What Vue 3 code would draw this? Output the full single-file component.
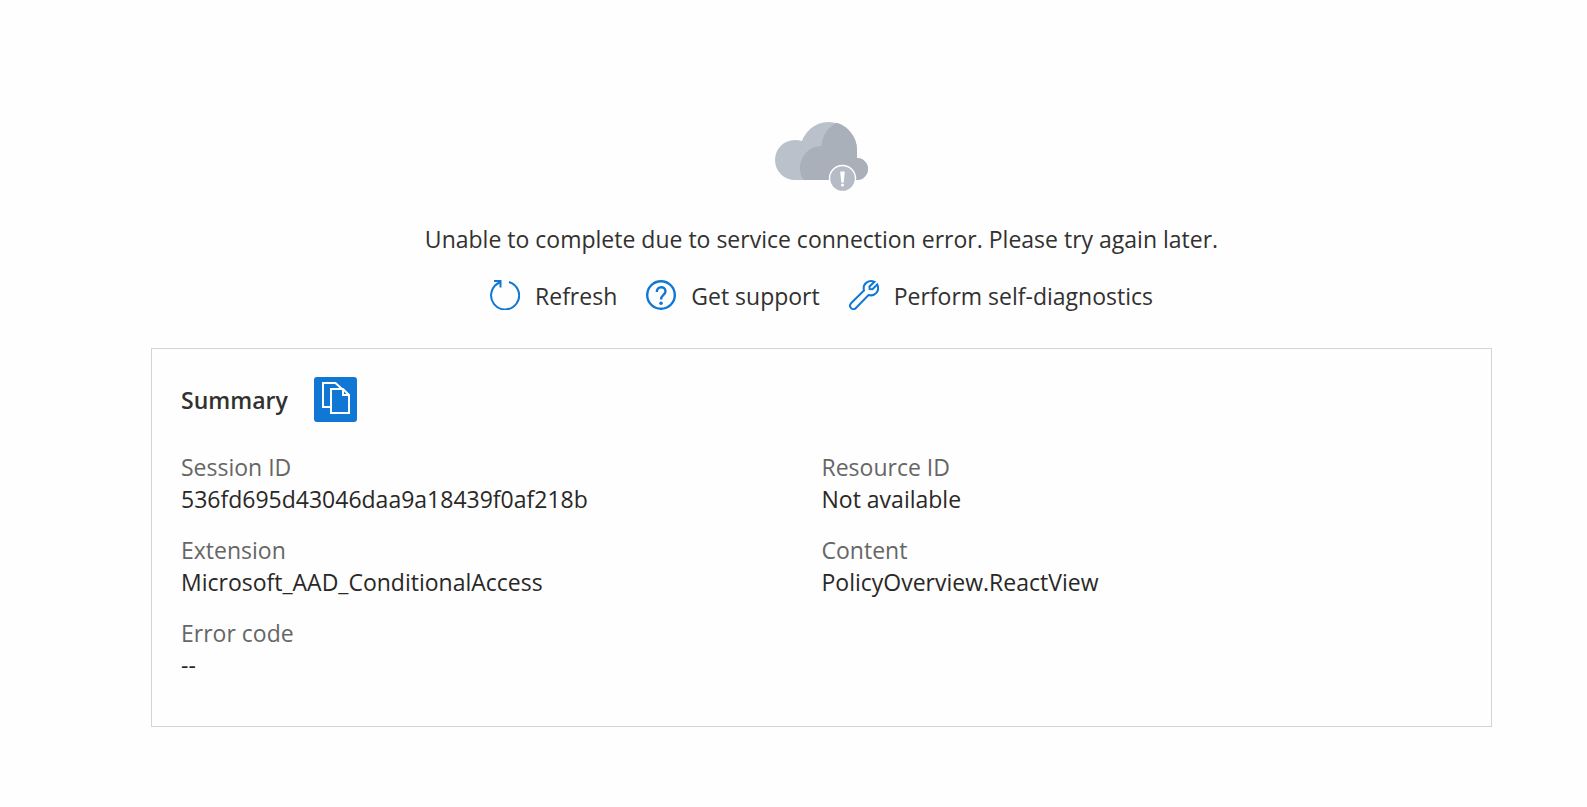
<template>
  <main class="error-page">
    <svg class="cloud" viewBox="0 0 94 71" aria-hidden="true">
      <path
        class="cloud-light"
        d="M20 59A20 20 0 0 1 20 19Q23.500 19 27 20A28.300 28.300 0 0 1 82 29V37A11 11 0 0 1 82 59Z"
      />
      <path
        class="cloud-dark"
        d="M28.500 59A22 22 0 0 1 46.500 25A29 29 0 0 1 61.500 1.800A28.300 28.300 0 0 1 82 29V37A11 11 0 0 1 82 59Z"
      />
      <circle class="badge" cx="67.500" cy="57.500" r="13" />
      <path class="mark" d="M65.200 50.500H69.800L68.800 61.500H66.200Z" />
      <circle class="mark" cx="67.500" cy="64" r="1.600" />
    </svg>

    <p class="message">
      Unable to complete due to service connection error. Please try again later.
    </p>

    <div class="actions">
      <button class="action" type="button">
        <svg class="icon" viewBox="0 0 30 30" aria-hidden="true">
          <path d="M10.300 2.300A14 14 0 1 0 19 2" />
          <path d="M4 1H10.500V7.500" />
        </svg>
        Refresh
      </button>
      <button class="action" type="button">
        <svg class="icon support" viewBox="0 0 30 30" aria-hidden="true">
          <circle cx="15" cy="15" r="13.800" />
          <path d="M10.800 12C10.800 5.600 19.500 5.800 19.500 11.300C19.500 15 15 14.800 15 19.500" />
          <circle class="dot" cx="15" cy="23.200" r="1.800" />
        </svg>
        Get support
      </button>
      <button class="action" type="button">
        <svg class="icon" viewBox="0 0 30 30" aria-hidden="true">
          <path
            d="M25.500 1.800C20 -.5 13.200 3.500 15 10.500L2 23.300C-.8 26.500 3.500 31.200 6.700 28.200L19.500 15C26 16.800 31.200 11 28.200 4.500L23.500 9.300L20.700 9L20.500 6.500Z"
          />
        </svg>
        Perform self-diagnostics
      </button>
    </div>

    <section class="summary">
      <header class="summary-header">
        <h2>Summary</h2>
        <button class="copy" type="button" aria-label="Copy summary">
          <svg viewBox="0 0 43 45" aria-hidden="true">
            <path d="M16.500 30H9V6H21.500L28 12" />
            <path d="M17 12H29L35 18V36H17Z" />
            <path d="M29 12V18H35" />
          </svg>
        </button>
      </header>

      <dl class="details">
        <div v-for="item in details" :key="item.label">
          <dt>{{ item.label }}</dt>
          <dd>{{ item.value }}</dd>
        </div>
      </dl>
    </section>
  </main>
</template>

<script setup>
  const details = [
    { label: "Session ID", value: "536fd695d43046daa9a18439f0af218b" },
    { label: "Resource ID", value: "Not available" },
    { label: "Extension", value: "Microsoft_AAD_ConditionalAccess" },
    { label: "Content", value: "PolicyOverview.ReactView" },
    { label: "Error code", value: "--" },
  ];
</script>

<style>
  body {
    margin: 0;
    background: #fefefe;
  }
</style>

<style scoped>
  .error-page {
    display: flex;
    flex-direction: column;
    align-items: center;
    padding: 121px 95px 80px 151px;
    font-family: "Open Sans", "Noto Sans", sans-serif;
    font-size: 23px;
    line-height: 32px;
    color: #323130;
  }

  .cloud {
    width: 94px;
    height: 71px;
  }
  .cloud-light {
    fill: #bac1ca;
  }
  .cloud-dark {
    fill: #a9b0ba;
  }
  .badge {
    fill: #b5bcc5;
    stroke: #ffffff;
    stroke-width: 1.4;
  }
  .mark {
    fill: #ffffff;
  }

  .message {
    margin: 31px 0 25px;
    text-align: center;
  }

  .actions {
    display: flex;
    flex-wrap: wrap;
    justify-content: center;
    gap: 29px;
  }
  .action {
    display: flex;
    align-items: flex-start;
    gap: 15px;
    padding: 0;
    border: 0;
    background: none;
    font: inherit;
    color: inherit;
    cursor: pointer;
  }
  .icon {
    width: 30px;
    height: 30px;
    fill: none;
    stroke: #1078d4;
    stroke-width: 2;
  }
  .support {
    stroke-width: 2.4;
  }
  .dot {
    fill: #1078d4;
    stroke: none;
  }

  .summary {
    box-sizing: border-box;
    width: 100%;
    margin-top: 36px;
    padding: 28px 29px 45px;
    border: 1px solid #d4d4d4;
  }
  .summary-header {
    display: flex;
    align-items: center;
    gap: 26px;
  }
  h2 {
    margin: 0;
    font-size: 23px;
    font-weight: 600;
  }
  .copy {
    width: 43px;
    height: 45px;
    padding: 0;
    border: 0;
    border-radius: 3px;
    background: #1078d4;
    cursor: pointer;
  }
  .copy svg {
    display: block;
    fill: none;
    stroke: #ffffff;
    stroke-width: 2;
  }

  .details {
    display: grid;
    grid-template-columns: 1fr 1fr;
    row-gap: 19px;
    margin: 29px 0 0;
  }
  dt {
    color: #666666;
  }
  dd {
    margin: 0;
    color: #292827;
    overflow-wrap: anywhere;
  }
</style>
